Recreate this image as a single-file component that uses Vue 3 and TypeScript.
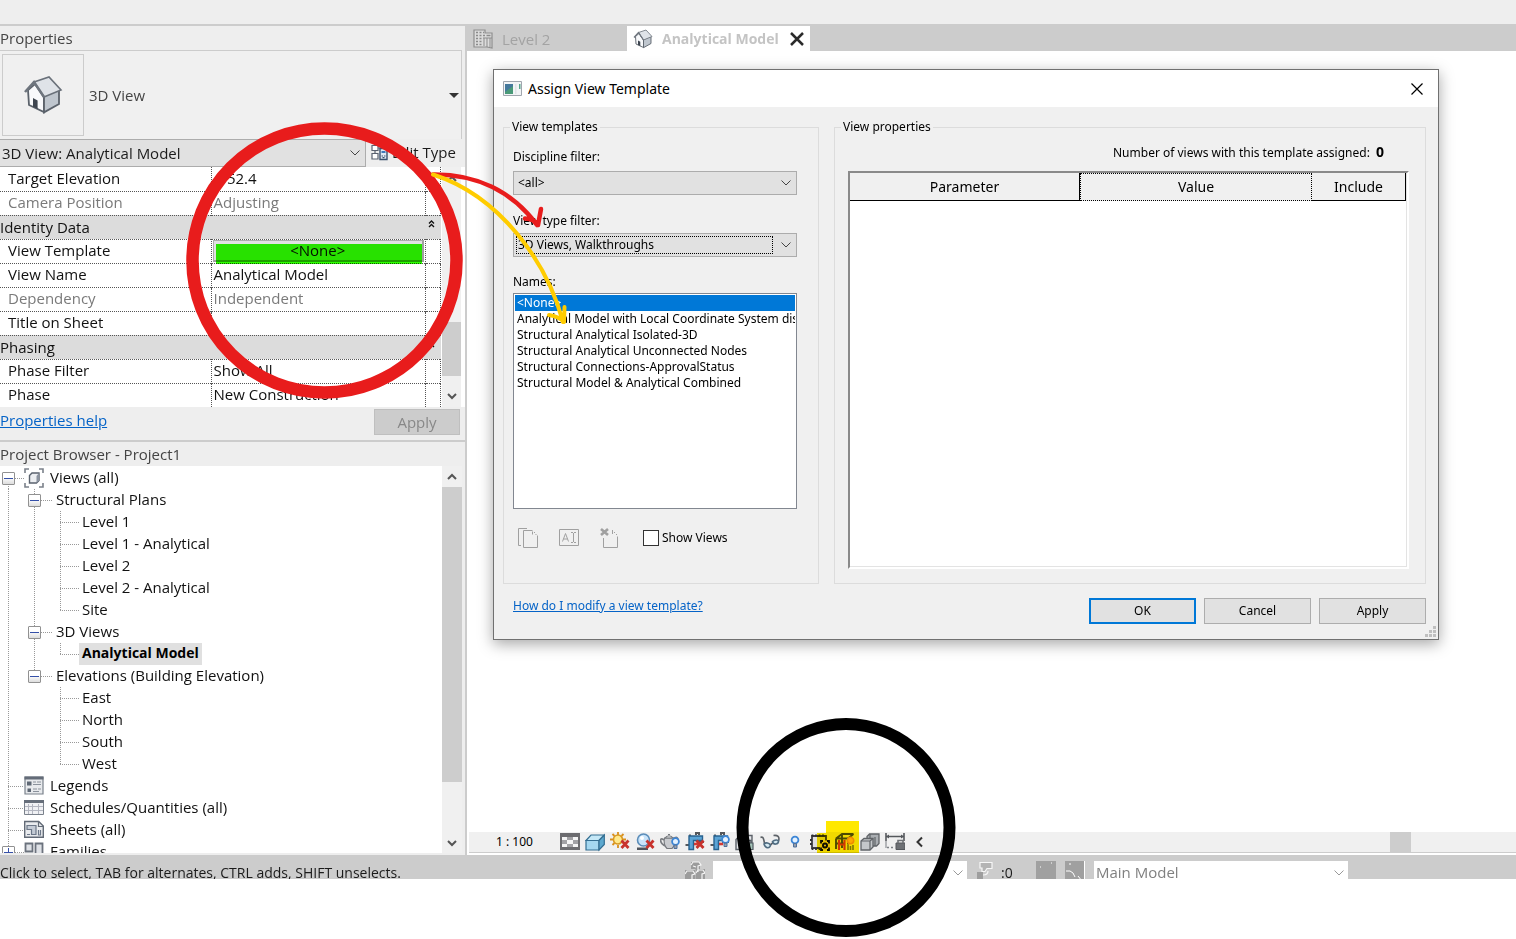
<script setup lang="ts">
import { ref } from 'vue'

interface Shape { d: string; fill?: string; stroke?: string; w?: number }
interface PropRow { label: string; value?: string; header?: boolean; muted?: boolean; button?: boolean }
interface TreeRow { label: string; depth: 0 | 1 | 2; toggle?: 'minus' | 'plus'; icon?: string; active?: boolean; guides: string }

const circle = (x: number, y: number, r: number): string =>
  `M${x - r} ${y}a${r} ${r} 0 1 0 ${2 * r} 0a${r} ${r} 0 1 0 ${-2 * r} 0z`

const cross: Shape = { d: 'M11.500 8.500L18.500 16M18.500 8.500L11.500 16', stroke: '#c8322c', w: 2.8 }
const bulb = (x: number, y: number): Shape[] => [
  { d: circle(x, y, 3.4), fill: '#e4f2ff', stroke: '#3d86d6', w: 1.8 },
  { d: `M${x - 1.5} ${y + 3.6}h3v3.400h-3z`, fill: '#9aa0a8', stroke: '#4d6f9c', w: 1 },
]
const crop: Shape[] = [
  { d: 'M0.500 13h4M12 10h7M4 3.500h2M11 3v-2h3v2', stroke: '#55585c', w: 2 },
  { d: 'M4 17.500V4H17.500V8.500H8.500V17.500z', fill: '#5ba4d6', stroke: '#28628f', w: 1.4 },
  { d: 'M9 12h4', stroke: '#d23a34', w: 2.6 },
]
const house: Shape[] = [
  { d: 'M2.500 7.500L6 4.500 10.500 11v7.500L3 15z', fill: '#f8f9fb', stroke: '#5b626b', w: 0.9 },
  { d: 'M10.500 10.500L18 7.500V14.500L10.500 18.700z', fill: '#bfc6ce', stroke: '#5b626b', w: 0.9 },
  { d: 'M5.500 3.500L13 1 19 7.500 10.500 11z', fill: '#dfe3e8', stroke: '#6a717a', w: 0.8 },
  { d: 'M1 8.500L5.500 3.500 10.500 11', stroke: '#6e757e', w: 1.3 },
  { d: 'M5 11.500l2.300 1.200v4.300l-2.300-1.100z', fill: '#3f4650' },
]

const icons: Record<string, Shape[]> = {
  house,
  plan: [
    { d: 'M1 1h11v3h7v15l-5-1H1z', fill: '#dcdcdc', stroke: '#8e8e8e', w: 1.2 },
    { d: 'M3 3.500h2M6.500 3.500h2M10 3.500h1M3 6.500h2M6.500 6.500h2M10 6.500h2M3 9.500h2M6.500 9.500h2M3 12.500h2M6.500 12.500h2M3 15.500h2M6.500 15.500h2M13.500 6.500h4', stroke: '#8b8b8b', w: 1.6 },
    { d: 'M11 9v8M14 9v9M17 9v9M10 9h9', stroke: '#8b8b8b', w: 1 },
  ],
  views: [
    { d: 'M1 5V1h4M15 1h4v4M19 15v4h-4M5 19H1v-4', stroke: '#7b818a', w: 1.6 },
    { d: 'M5.500 7.500L8 5h7v7.500L12.500 15h-7z', fill: '#eceef1', stroke: '#59616d', w: 1.4 },
    { d: 'M12.500 8v7L15 12.500V5z', fill: '#8b93a0' },
  ],
  legends: [
    { d: 'M1 1h18v17H1z', fill: '#e8eaed', stroke: '#7a818b', w: 1.2 },
    { d: 'M0.500 0.500h19v3h-19z', fill: '#646c78' },
    { d: 'M3 5.500h4.500v4H3zM3.500 12.500h3.500v3.500H3.500z', fill: '#5f6875' },
    { d: 'M9 6h3M13 6h4M9 8.500h8M9 13h4M14 13h3M9 15.500h6', stroke: '#8b929c', w: 1.2 },
  ],
  schedules: [
    { d: 'M0.500 3h19v13.500H0.500z', fill: '#f0f1f4', stroke: '#7a818b', w: 1 },
    { d: 'M0 2h20v3H0z', fill: '#666e7a' },
    { d: 'M1 8.500h18M1 12.500h18M4.500 6v10M8.500 6v10M14.500 6v10', stroke: '#b3b6c0', w: 1 },
  ],
  sheets: [
    { d: 'M0.700 1.500h14L19.300 6V17.300H0.700z', fill: '#e9ebee', stroke: '#626a76', w: 1.4 },
    { d: 'M14.500 1.500v5h4.500', stroke: '#626a76', w: 1.2 },
    { d: 'M3 5.500h9v9H7.500V9.500H3z', fill: '#c4cbd5', stroke: '#6c7788', w: 1.2 },
    { d: 'M3 14.500h3M14.500 10v5h2v-5', stroke: '#6c7788', w: 1.2 },
  ],
  families: [
    { d: 'M1.500 1.500h7v8h-7zM11.500 1.500h7v16h-7z', fill: '#dfe2e7', stroke: '#6b727d', w: 1.8 },
    { d: 'M1.500 12.500h7v5h-7z', fill: '#cfd4da', stroke: '#6b727d', w: 1.6 },
  ],
  editType: [
    { d: 'M1 1.500h6v5H1zM1 9.500h6v5.500H1z', fill: '#fff', stroke: '#5a6270', w: 1.2 },
    { d: 'M4 6.500v3M7 4h3v1', stroke: '#5a6270', w: 1.2 },
    { d: 'M9 4.500h7v11H9z', fill: '#dfe8f3', stroke: '#39506e', w: 1.4 },
    { d: 'M10.500 7h4v2h-4z', fill: '#3e78b8' },
    { d: 'M10.500 12h1.500M13 12h1.500M11.500 13.700h2', stroke: '#39506e', w: 1.2 },
  ],
  windowIcon: [
    { d: 'M0.500 0.500h18v14H0.500z', fill: '#f2f4f6', stroke: '#a0a6ae', w: 1 },
    { d: 'M2 3h8v10H2z', fill: '#4a9a78' },
    { d: 'M2 3h8v2L2 11z', fill: '#44789c' },
    { d: 'M12 3h1.500v10H12z', fill: '#dfe3e7' },
    { d: 'M16 3h1.500v5H16z', fill: '#57a58c' },
  ],
  detail: [
    { d: 'M0 1h20v17H0z', fill: '#6d6d70' },
    { d: 'M2 5h5v3H2zM13 5h5v3h-5zM7 8h6v4H7zM2 12h5v3H2zM13 12h5v3h-5z', fill: '#f5f5f5' },
    { d: 'M7 5h6v3H7zM2 8h5v4H2zM13 8h5v4h-5zM7 12h6v3H7z', fill: '#a3a3a6' },
  ],
  cube: [
    { d: 'M1 8.500h13v9.500H1z', fill: '#a5d8f0', stroke: '#356f92', w: 1.2 },
    { d: 'M1 8.500L6 3h13.300L14 8.500z', fill: '#c5e8f7', stroke: '#356f92', w: 1.2 },
    { d: 'M14 8.500L19.300 3v9.500L14 18z', fill: '#5da9cf', stroke: '#356f92', w: 1.2 },
  ],
  sun: [
    { d: 'M8 0v3M8 13v3M0 7.500h3M13 7.500h3M2.500 2l2 2M13.500 2l-2 2M2.500 13l2-2', stroke: '#d98f1c', w: 1.8 },
    { d: circle(8, 7.5, 4.5), fill: '#ffe98c', stroke: '#d99a22', w: 1.6 },
    cross,
  ],
  shadow: [
    { d: 'M2 15.500h11v2.500H2z', fill: '#4e545c' },
    { d: circle(8.5, 8, 6), fill: '#c9e4fa', stroke: '#5b8db9', w: 1.6 },
    { d: circle(7, 6, 2), fill: '#fff' },
    cross,
  ],
  teapot: [
    { d: 'M4 8C1 6 0 7 1 10s3 3 4 4M13 7c4-3 6-1 4 3', stroke: '#7a7d82', w: 1.8 },
    { d: 'M4.500 6h9c2 4 1 8-1.500 10.500h-5C4 13.500 3.500 10.500 4.500 6z', fill: '#c9cbcf', stroke: '#75787d', w: 1.1 },
    { d: 'M5 6c2-3 6-3 8 0zM8 2.500h2', fill: '#e3e4e6', stroke: '#75787d', w: 1.2 },
    ...bulb(15.5, 9.5),
  ],
  cropOff: [...crop, cross],
  cropShow: [...crop, ...bulb(15.5, 7.5)],
  lockView: [
    { d: 'M1 7.500L5 3.500h12v9l-4 5H1z', fill: '#e3e5e8', stroke: '#5b6168', w: 1.4 },
    { d: 'M10 11h8v6.500h-8z', fill: '#a5c4b8', stroke: '#4f5960', w: 1.2 },
    { d: 'M12 11V8.500h4V11', stroke: '#4f5960', w: 1.4 },
  ],
  glasses: [
    { d: 'M0.500 5.500C3.500 4 4 8 4.500 11.500M10.500 13c1-1.500 2-1.500 2.500-2.500M18.500 9c1.500-4.500-1-6-5-5.500', stroke: '#5c6167', w: 1.6 },
    { d: 'M4 12c2-2 5-1 6.500 1-.500 3.500-5 4-6.500-1z', fill: '#d4e9f2', stroke: '#4f6b80', w: 1.6 },
    { d: 'M12.500 9.500c2-2 5.500-2 6-.500 0 3.500-5 4.500-6 .500z', fill: '#d4e9f2', stroke: '#4f6b80', w: 1.6 },
  ],
  reveal: [...bulb(10, 8)],
  temporary: [
    { d: 'M2 4h14v12H2z', fill: '#dedee2', stroke: '#3d3d44', w: 1.8 },
    { d: 'M2.500 2.500v2M6 2.500v2M9.500 2.500v2M13 2.500v2M2.500 16v2M6 16v2M9.500 16v2M0 8h2M0 12h2', stroke: '#2e2e33', w: 1.8 },
    { d: 'M10 8.500h10v10H10z', fill: '#e8d200' },
    { d: 'M11 11.500V9h2M17 9h2v2.500M19 15.500V18h-2M13 18h-2v-2.500', stroke: '#111', w: 1.8 },
    { d: circle(15, 13.5, 2), fill: '#e8d200', stroke: '#111', w: 2 },
  ],
  analytical: [
    { d: 'M1 6.500L7 2h11.500M1 6.500h12L18.500 2M1 6.500V17M7 3v13M13 6.500v6M1 11.500h8', stroke: '#4c5226', w: 1.9 },
    { d: 'M4 8v10M9.500 8v10M4 12.500h5.500', stroke: '#d3401c', w: 2.2 },
    { d: circle(15.5, 8.5, 3.2), fill: '#ffb84a', stroke: '#f09a28', w: 1.6 },
    { d: 'M13 13v5M15.500 14v4M18 13v5', stroke: '#81813a', w: 1.6 },
  ],
  displace: [
    { d: 'M7 4.500L9.500 2H19v9.500L16.500 14H7z', fill: '#aaaeb2', stroke: '#606468', w: 1.3 },
    { d: 'M1 9l3-2.500h9V15l-3 3H1z', fill: '#c4c7ca', stroke: '#606468', w: 1.3 },
    { d: 'M1 9h9v9M10 9l3-2.500M10 2v4M15 5v9', stroke: '#606468', w: 1.2 },
  ],
  constraint: [
    { d: 'M1 1v8M19 1v8M1 4.500h18', stroke: '#55585c', w: 1.6 },
    { d: 'M1 4.500l3-2v4zM19 4.500l-3-2v4z', fill: '#55585c' },
    { d: 'M1 9v7', stroke: '#9a9da1', w: 1.4 },
    { d: 'M2 15.500h2M6 15.500h2', stroke: '#7c8085', w: 1.6 },
    { d: 'M11 11h9v6.500h-9z', fill: '#6d7074', stroke: '#54575b', w: 1 },
    { d: 'M13 11V8.500h5V11', stroke: '#6d7074', w: 1.6 },
  ],
  workset: [
    { d: 'M6 1h9v7H6zM0 9h10v10H0zM10.500 8H20v11h-9.500z', fill: '#9c9c9c' },
    { d: 'M6 4l2-3h6l2 3-3 1v6M8 5l3 1M0 13l2-3h6l2 3-3 1v5M11 12l2-3h5l2 3-3 1v5', stroke: '#f5f5f5', w: 1.2 },
  ],
  option: [
    { d: 'M4 1.500h12v6H11l-2 3H6V7H4z', fill: '#b4b4b4', stroke: '#f7f7f7', w: 1.2 },
    { d: 'M1 11h6v7H1z', fill: '#9e9e9e' },
    { d: 'M7 14c3 0 5-1 5-4', stroke: '#f7f7f7', w: 1.2 },
  ],
  square: [
    { d: 'M0 0h20v20H0z', fill: '#a0a0a0' },
    { d: 'M4 6h1M15 2h1', stroke: '#fff', w: 1 },
  ],
  pick: [
    { d: 'M0 0h20v20H0z', fill: '#a0a0a0' },
    { d: 'M19.500 0v20M1 10h4l3 2 2 4M5 2v2M13 15l4 5', stroke: '#fff', w: 1 },
  ],
  duplicate: [
    { d: 'M4 18.500H1.500V1.500h8.500', stroke: '#a0a0a0', w: 1 },
    { d: 'M6.500 3.500v17h14v-12M6.500 3.500h9M15.500 4.500v3M17 5.500h1M18.500 7.500h1', stroke: '#a0a0a0', w: 1 },
  ],
  rename: [
    { d: 'M1.500 2.500h19v16h-19z', stroke: '#a0a0a0', w: 1 },
    { d: 'M4.500 14.500L7.500 6.500 10.500 14.500M5.500 12h4M13 5.500h2M16 5.500h2M15.500 6v9M13 15.500h2M16 15.500h2', stroke: '#a0a0a0', w: 1 },
  ],
  remove: [
    { d: 'M2 2l7 6M9 2l-7 6', stroke: '#a0a0a0', w: 2.6 },
    { d: 'M4.500 11v9.500h14V9.500M13.500 3v4M15 5.500h1M17 7.500h1', stroke: '#a0a0a0', w: 1 },
  ],
}

const propRows: PropRow[] = [
  { label: 'Target Elevation', value: '-152.4' },
  { label: 'Camera Position', value: 'Adjusting', muted: true },
  { label: 'Identity Data', header: true },
  { label: 'View Template', value: '<None>', button: true },
  { label: 'View Name', value: 'Analytical Model' },
  { label: 'Dependency', value: 'Independent', muted: true },
  { label: 'Title on Sheet', value: '' },
  { label: 'Phasing', header: true },
  { label: 'Phase Filter', value: 'Show All' },
  { label: 'Phase', value: 'New Construction' },
]

const root = 'M8.500 0V22'
const branch = 'M34.500 0V22'
const leaf = 'M60.500 0V22M60 11.500H79'
const leafEnd = 'M60.500 0V11M60 11.500H79'

const treeRows: TreeRow[] = [
  { label: 'Views (all)', depth: 0, toggle: 'minus', icon: 'views', guides: 'M8.500 11V22M15 11.500H24' },
  { label: 'Structural Plans', depth: 1, toggle: 'minus', guides: root + branch + 'M41 11.500H53' },
  { label: 'Level 1', depth: 2, guides: root + branch + leaf },
  { label: 'Level 1 - Analytical', depth: 2, guides: root + branch + leaf },
  { label: 'Level 2', depth: 2, guides: root + branch + leaf },
  { label: 'Level 2 - Analytical', depth: 2, guides: root + branch + leaf },
  { label: 'Site', depth: 2, guides: root + branch + leafEnd },
  { label: '3D Views', depth: 1, toggle: 'minus', guides: root + branch + 'M41 11.500H53' },
  { label: 'Analytical Model', depth: 2, active: true, guides: root + branch + leafEnd },
  { label: 'Elevations (Building Elevation)', depth: 1, toggle: 'minus', guides: root + 'M34.500 0V11M41 11.500H53' },
  { label: 'East', depth: 2, guides: root + leaf },
  { label: 'North', depth: 2, guides: root + leaf },
  { label: 'South', depth: 2, guides: root + leaf },
  { label: 'West', depth: 2, guides: root + leafEnd },
  { label: 'Legends', depth: 0, icon: 'legends', guides: root + 'M8 11.500H24' },
  { label: 'Schedules/Quantities (all)', depth: 0, icon: 'schedules', guides: root + 'M8 11.500H24' },
  { label: 'Sheets (all)', depth: 0, icon: 'sheets', guides: root + 'M8 11.500H24' },
  { label: 'Families', depth: 0, toggle: 'plus', icon: 'families', guides: root + 'M15 11.500H24' },
]

const viewTools = [
  ['detail', 'Detail level'], ['cube', 'Visual style'], ['sun', 'Sun path'], ['shadow', 'Shadows'],
  ['teapot', 'Rendering dialog'], ['cropOff', 'Crop view'], ['cropShow', 'Show crop region'],
  ['lockView', 'Lock 3D view'], ['glasses', 'Temporary hide'], ['reveal', 'Reveal hidden elements'],
  ['temporary', 'Temporary view properties'], ['analytical', 'Analytical model'],
  ['displace', 'Displacement sets'], ['constraint', 'Reveal constraints'],
]

const templates = [
  '<None>',
  'Analytical Model with Local Coordinate System displayed',
  'Structural Analytical Isolated-3D',
  'Structural Analytical Unconnected Nodes',
  'Structural Connections-ApprovalStatus',
  'Structural Model & Analytical Combined',
]
const selected = ref(0)
const showViews = ref(false)
const listTools = [['duplicate', 'Duplicate'], ['rename', 'Rename'], ['remove', 'Delete']]
</script>

<template>
  <div class="app">
    <div class="ribbon"></div>

    <div class="workspace">
      <aside class="side">
        <section class="properties">
          <h2 class="pane-title">Properties</h2>
          <div class="type-selector">
            <div class="preview">
              <svg class="house" viewBox="0 0 20 20">
                <path v-for="(s, i) in icons.house" :key="i" :d="s.d" :fill="s.fill ?? 'none'" :stroke="s.stroke ?? 'none'" :stroke-width="s.w" />
              </svg>
            </div>
            <span class="type-name">3D View</span>
            <button class="type-drop" aria-label="Choose type"></button>
          </div>

          <div class="instance">
            <div class="combo instance-combo">
              <select aria-label="Instance"><option>3D View: Analytical Model</option></select>
              <svg class="chev" viewBox="0 0 10 6"><path d="M0.500 0.500L5 5 9.500 0.500" /></svg>
            </div>
            <button class="edit-type">
              <svg class="edit-icon" viewBox="0 0 17 17">
                <path v-for="(s, i) in icons.editType" :key="i" :d="s.d" :fill="s.fill ?? 'none'" :stroke="s.stroke ?? 'none'" :stroke-width="s.w" />
              </svg>
              Edit Type
            </button>
          </div>

          <div class="grid-wrap">
            <table class="prop-grid">
              <colgroup><col class="c-name" /><col /><col class="c-end" /></colgroup>
              <tbody>
                <tr v-for="row in propRows" :key="row.label" :class="{ header: row.header, muted: row.muted }">
                  <template v-if="row.header">
                    <th colspan="2">{{ row.label }}</th>
                    <td class="fold">
                      <svg viewBox="0 0 7 8"><path d="M1 3.500L3.500 1 6 3.500M1 7L3.500 4.500 6 7" /></svg>
                    </td>
                  </template>
                  <template v-else>
                    <td class="name">{{ row.label }}</td>
                    <td class="value" :class="{ holder: row.button }">
                      <button v-if="row.button" class="template-btn">{{ row.value }}</button>
                      <template v-else>{{ row.value }}</template>
                    </td>
                    <td></td>
                  </template>
                </tr>
              </tbody>
            </table>
            <div class="scroll prop-scroll">
              <svg class="arrow" viewBox="0 0 10 7"><path d="M1 6L5 2 9 6" /></svg>
              <span class="thumb"></span>
              <svg class="arrow" viewBox="0 0 10 7"><path d="M1 1L5 5 9 1" /></svg>
            </div>
          </div>

          <div class="prop-foot">
            <a href="#">Properties help</a>
            <button class="apply" disabled>Apply</button>
          </div>
        </section>

        <section class="browser">
          <h2 class="pane-title">Project Browser - Project1</h2>
          <div class="browser-body">
            <ul class="tree">
              <li v-for="row in treeRows" :key="row.label" :class="['d' + row.depth, { parent: row.toggle }]">
                <svg class="guides" viewBox="0 0 80 22"><path :d="row.guides" /></svg>
                <button v-if="row.toggle" class="toggle" :aria-label="row.label">
                  <svg viewBox="0 0 11 11"><path :d="row.toggle === 'plus' ? 'M1 5.500H10M5.500 1V10' : 'M1 5.500H10'" /></svg>
                </button>
                <svg v-if="row.icon" class="tree-icon" viewBox="0 0 20 20">
                  <path v-for="(s, i) in icons[row.icon]" :key="i" :d="s.d" :fill="s.fill ?? 'none'" :stroke="s.stroke ?? 'none'" :stroke-width="s.w" />
                </svg>
                <span class="label" :class="{ active: row.active }">{{ row.label }}</span>
              </li>
            </ul>
            <div class="scroll tree-scroll">
              <svg class="arrow" viewBox="0 0 10 7"><path d="M1 6L5 2 9 6" /></svg>
              <span class="thumb"></span>
              <svg class="arrow" viewBox="0 0 10 7"><path d="M1 1L5 5 9 1" /></svg>
            </div>
          </div>
        </section>
      </aside>

      <main class="main">
        <nav class="tabs">
          <button class="tab">
            <svg class="tab-icon" viewBox="0 0 20 20">
              <path v-for="(s, i) in icons.plan" :key="i" :d="s.d" :fill="s.fill ?? 'none'" :stroke="s.stroke ?? 'none'" :stroke-width="s.w" />
            </svg>
            Level 2
          </button>
          <div class="tab current">
            <svg class="tab-icon" viewBox="0 0 20 20">
              <path v-for="(s, i) in icons.house" :key="i" :d="s.d" :fill="s.fill ?? 'none'" :stroke="s.stroke ?? 'none'" :stroke-width="s.w" />
            </svg>
            Analytical Model
            <button class="tab-close" aria-label="Close tab">
              <svg viewBox="0 0 14 14"><path d="M1 1L13 13M13 1L1 13" /></svg>
            </button>
          </div>
        </nav>

        <div class="canvas"></div>

        <div class="view-bar">
          <span class="scale">1 : 100</span>
          <button v-for="[name, title] in viewTools" :key="name" class="tool" :class="{ marked: name === 'analytical' }" :aria-label="title">
            <svg viewBox="0 0 20 20">
              <path v-for="(s, i) in icons[name]" :key="i" :d="s.d" :fill="s.fill ?? 'none'" :stroke="s.stroke ?? 'none'" :stroke-width="s.w" />
            </svg>
          </button>
          <button class="tool" aria-label="Collapse">
            <svg class="back" viewBox="0 0 20 20"><path d="M12 5.500L7.500 10 12 14.500" /></svg>
          </button>
          <div class="h-track"><span class="h-thumb"></span></div>
        </div>

        <section class="dialog" role="dialog" aria-labelledby="dlg-title">
          <header class="dlg-head">
            <svg class="dlg-icon" viewBox="0 0 19 15">
              <path v-for="(s, i) in icons.windowIcon" :key="i" :d="s.d" :fill="s.fill ?? 'none'" :stroke="s.stroke ?? 'none'" :stroke-width="s.w" />
            </svg>
            <h1 id="dlg-title">Assign View Template</h1>
            <button class="dlg-close" aria-label="Close">
              <svg viewBox="0 0 12 12"><path d="M0.500 0.500L11.500 11.500M11.500 0.500L0.500 11.500" /></svg>
            </button>
          </header>

          <div class="groups">
            <fieldset class="templates">
              <legend>View templates</legend>
              <label class="l1" for="discipline">Discipline filter:</label>
              <div class="combo">
                <select id="discipline"><option>&lt;all&gt;</option></select>
                <svg class="chev" viewBox="0 0 10 6"><path d="M0.500 0.500L5 5 9.500 0.500" /></svg>
              </div>
              <label class="l2" for="viewtype">View type filter:</label>
              <div class="combo focus">
                <select id="viewtype"><option>3D Views, Walkthroughs</option></select>
                <svg class="chev" viewBox="0 0 10 6"><path d="M0.500 0.500L5 5 9.500 0.500" /></svg>
              </div>
              <span id="names" class="l3">Names:</span>
              <ul class="names" role="listbox" aria-labelledby="names">
                <li v-for="(t, i) in templates" :key="t" role="option" :aria-selected="i === selected" :class="{ on: i === selected }" @click="selected = i">{{ t }}</li>
              </ul>
              <div class="list-tools">
                <button v-for="[name, title] in listTools" :key="name" disabled :aria-label="title">
                  <svg viewBox="0 0 22 22">
                    <path v-for="(s, i) in icons[name]" :key="i" :d="s.d" fill="none" :stroke="s.stroke" :stroke-width="s.w" />
                  </svg>
                </button>
                <label class="show"><input v-model="showViews" type="checkbox" />Show Views</label>
              </div>
            </fieldset>

            <fieldset class="view-props">
              <legend>View properties</legend>
              <p class="count">Number of views with this template assigned: <b>0</b></p>
              <div class="sheet">
                <table>
                  <colgroup><col class="w1" /><col /><col class="w3" /></colgroup>
                  <thead><tr><th>Parameter</th><th class="cur">Value</th><th>Include</th></tr></thead>
                </table>
              </div>
            </fieldset>
          </div>

          <footer class="dlg-foot">
            <a href="#">How do I modify a view template?</a>
            <button class="ok">OK</button>
            <button>Cancel</button>
            <button>Apply</button>
          </footer>
          <svg class="grip" viewBox="0 0 11 11">
            <path d="M8 0h3v3H8zM4 4h3v3H4zM8 4h3v3H8zM0 8h3v3H0zM4 8h3v3H4zM8 8h3v3H8z" />
          </svg>
        </section>
      </main>
    </div>

    <div class="status">
      <span class="hint">Click to select, TAB for alternates, CTRL adds, SHIFT unselects.</span>
      <svg class="st-icon" viewBox="0 0 20 20">
        <path v-for="(s, i) in icons.workset" :key="i" :d="s.d" :fill="s.fill ?? 'none'" :stroke="s.stroke ?? 'none'" :stroke-width="s.w" />
      </svg>
      <div class="st-combo">
        <select aria-label="Workset"><option></option></select>
        <svg class="chev" viewBox="0 0 10 6"><path d="M0.500 0.500L5 5 9.500 0.500" /></svg>
      </div>
      <svg class="st-icon" viewBox="0 0 20 20">
        <path v-for="(s, i) in icons.option" :key="i" :d="s.d" :fill="s.fill ?? 'none'" :stroke="s.stroke ?? 'none'" :stroke-width="s.w" />
      </svg>
      <span class="zero">:0</span>
      <svg class="st-icon sq" viewBox="0 0 20 20">
        <path v-for="(s, i) in icons.square" :key="i" :d="s.d" :fill="s.fill ?? 'none'" :stroke="s.stroke ?? 'none'" :stroke-width="s.w" />
      </svg>
      <svg class="st-icon sq" viewBox="0 0 20 20">
        <path v-for="(s, i) in icons.pick" :key="i" :d="s.d" :fill="s.fill ?? 'none'" :stroke="s.stroke ?? 'none'" :stroke-width="s.w" />
      </svg>
      <div class="st-combo">
        <select aria-label="Design option"><option>Main Model</option></select>
        <svg class="chev" viewBox="0 0 10 6"><path d="M0.500 0.500L5 5 9.500 0.500" /></svg>
      </div>
    </div>

    <svg class="ink" viewBox="0 0 960 939">
      <circle cx="324.500" cy="260.500" r="132" stroke="#e81c1c" stroke-width="12.500" />
      <path d="M433 174.500C476 174 512 191 537 225M541 209L538 225M525 218.500Q534 219 538 225" stroke="#e81c1c" stroke-width="4.500" />
      <path d="M433 174.500C500 196 547 262 563 322M564.500 307L564 322M549 315Q560 317 564 322" stroke="#ffcc00" stroke-width="4" />
      <circle cx="846" cy="827.500" r="103.500" stroke="#000" stroke-width="12" />
    </svg>
  </div>
</template>

<style>
body { margin: 0; background: #fff; }
</style>

<style scoped>
* { box-sizing: border-box; }
.app {
  position: relative;
  display: flex;
  flex-direction: column;
  height: 100vh;
  min-height: 760px;
  padding-bottom: 60px;
  background: #fff;
  font-family: "Open Sans", "Noto Sans", sans-serif;
  font-size: 15px;
  line-height: 22px;
  color: #1b1b1b;
}
button, select, input { font: inherit; color: inherit; margin: 0; }
button { padding: 0; border: 0; background: none; }
svg { display: block; flex: none; }
h1, h2, p, ul { margin: 0; padding: 0; font-size: inherit; font-weight: 400; }
ul { list-style: none; }
a { color: #0563c7; text-decoration: underline; }

.ribbon { flex: none; height: 24px; background: #eee; }
.workspace { flex: 1; display: flex; min-height: 0; }

.side {
  flex: none;
  width: 467px;
  display: flex;
  flex-direction: column;
  border-top: 2px solid #ccc;
  border-right: 2px solid #ccc;
  background: #eee;
}
.pane-title { height: 24px; line-height: 24px; color: #444; }

.type-selector {
  display: flex;
  align-items: center;
  height: 89px;
  margin-right: 3px;
  padding: 0 2px;
  border: solid #ccc;
  border-width: 1px 1px 0 0;
  background: #f0f0f0;
}
.preview {
  display: flex;
  align-items: center;
  justify-content: center;
  width: 82px;
  height: 82px;
  border: 1px solid #ccc;
}
.house { width: 40px; height: 40px; }
.type-name { flex: 1; padding-left: 5px; color: #444; }
.type-drop { border: 5px solid transparent; border-top-color: #333; border-bottom-width: 0; }

.instance { display: flex; align-items: flex-start; height: 28px; }
.combo { position: relative; display: flex; align-items: center; height: 24px; border: 1px solid #acacac; background: #e1e1e1; }
.combo select { flex: 1; width: 100%; height: 100%; padding: 0 24px 0 4px; border: 0; appearance: none; background: none; outline: 0; }
.chev { position: absolute; right: 5px; width: 10px; height: 6px; pointer-events: none; }
.chev path { fill: none; stroke: #444; stroke-width: 1; }
.instance-combo { width: 366px; height: 28px; border-left: 0; }
.instance-combo select { padding-left: 2px; }
.edit-type { display: flex; align-items: center; gap: 4px; height: 26px; padding-left: 5px; }
.edit-icon { width: 17px; height: 17px; }

.grid-wrap { display: flex; background: #fff; }
.prop-grid { flex: 1; table-layout: fixed; border-collapse: collapse; color: #111; }
.c-name { width: 211px; }
.c-end { width: 15px; }
.prop-grid tr { height: 24px; border-bottom: 1px dotted #555; }
.prop-grid tr:last-child { border-bottom: 0; }
.prop-grid td { height: 24px; padding: 0 0 2px; line-height: 20px; border-right: 1px dotted #555; white-space: nowrap; }
.prop-grid .name { padding-left: 8px; }
.prop-grid .value { padding-left: 2px; }
.prop-grid th { padding: 0; text-align: left; font-weight: 400; }
.prop-grid .header { background: #dcdcdc; }
.muted { color: #7a7a7a; }
.prop-grid .fold { border: 0; }
.fold svg { width: 7px; height: 8px; margin: 0 0 4px 2px; }
.fold path { fill: none; stroke: #111; stroke-width: 1.3; }
.prop-grid .holder { padding: 0 1px; }
.template-btn {
  position: relative;
  display: block;
  width: 100%;
  height: 22px;
  line-height: 19px;
  border: 1px solid #acacac;
  border-bottom: 2px solid #a0a0a0;
  border-right: 2px solid #a0a0a0;
  background: #e1e1e1;
}
.template-btn::after {
  content: "";
  position: absolute;
  inset: 3px 0 -4px 2px;
  background: #2dff00;
  mix-blend-mode: multiply;
}

.scroll { display: flex; flex-direction: column; align-items: center; background: #f0f0f0; }
.arrow { width: 10px; height: 7px; }
.arrow path { fill: none; stroke: #555; stroke-width: 2; }
.thumb { width: 100%; background: #cdcdcd; }
.prop-scroll { width: 20px; margin-right: 4px; padding: 8px 0 7px; border-left: 1px solid #fff; }
.prop-scroll .thumb { height: 54px; margin: 140px 0 auto; }

.prop-foot { display: flex; justify-content: space-between; height: 33px; padding: 2px 5px 0 0; }
.apply { width: 86px; height: 26px; border: 1px solid #bfbfbf; background: #ccc; color: #888; }

.browser { flex: 1; display: flex; flex-direction: column; min-height: 0; border-top: 2px solid #ccc; padding-bottom: 2px; }
.browser-body { flex: 1; display: flex; min-height: 0; margin-right: 3px; overflow: hidden; background: #fff; }
.tree { flex: 1; padding-top: 1px; }
.tree li { position: relative; display: flex; align-items: center; height: 22px; }
.guides { position: absolute; left: 0; top: 0; width: 80px; height: 22px; }
.guides path { fill: none; stroke: #999; stroke-width: 1; stroke-dasharray: 1 1; }
.toggle { position: relative; width: 13px; height: 13px; border: 1px solid #919191; border-radius: 1px; background: linear-gradient(#fff 40%, #ddd); }
.toggle svg { width: 11px; height: 11px; }
.toggle path { stroke: #3550a8; stroke-width: 1; }
.d0 { padding-left: 24px; }
.d0.parent { padding-left: 2px; }
.d0 .toggle { margin-right: 9px; }
.d1 { padding-left: 28px; }
.d1 .toggle { margin-right: 12px; }
.d2 { padding-left: 79px; }
.tree-icon { position: relative; width: 20px; height: 20px; margin-right: 3px; }
.label { padding: 0 3px 2px; line-height: 20px; color: #111; white-space: nowrap; }
.active { font-weight: 700; background: #e0e0e0; color: #000; font-size: 14px; }
.tree-scroll { width: 20px; padding: 7px 0 6px; }
.tree-scroll .thumb { flex: 0 1 295px; margin: 7px 0 auto; }

.main { position: relative; flex: 1; min-width: 0; display: flex; flex-direction: column; background: #fff; }
.tabs { flex: none; display: flex; height: 27px; padding-top: 2px; background: #ccc; }
.tab { display: flex; align-items: center; width: 160px; padding-left: 6px; gap: 9px; color: #a3a3a3; line-height: 20px; }
.current { width: auto; padding-right: 6px; background: #fff; color: #c4c4c4; font-weight: 700; font-size: 14px; }
.tab .tab-close { padding-left: 2px; }
.tab-icon { width: 20px; height: 20px; }
.tab-close svg { width: 14px; height: 14px; }
.tab-close path { stroke: #2b2b2b; stroke-width: 2.500; }
.canvas { flex: 1; }

.view-bar { flex: none; display: flex; align-items: center; height: 21px; margin: 0 0 2px 2px; border-bottom: 1px solid #ccc; background: #f0f0f0; font: 12px/18px "Noto Sans", "Open Sans", sans-serif; color: #000; }
.scale { width: 88px; padding-left: 27px; }
.tool { position: relative; width: 25px; display: flex; justify-content: center; }
.tool svg { width: 20px; height: 20px; }
.back path { fill: none; stroke: #333; stroke-width: 2; }
.marked::after {
  content: "";
  position: absolute;
  inset: -11px -2px -1px -15px;
  background: #ffe800;
  clip-path: polygon(9px 0, 100% 0, 100% 100%, 0 100%, 0 12px, 9px 12px);
  mix-blend-mode: multiply;
}
.h-track { flex: 1; align-self: stretch; display: flex; justify-content: flex-end; padding-right: 105px; }
.h-thumb { width: 21px; background: #cdcdcd; }

.dialog {
  position: absolute;
  left: 26px;
  right: 77px;
  top: 45px;
  border: 1px solid #707070;
  background: #f0f0f0;
  box-shadow: 0 4px 14px rgba(0, 0, 0, 0.35);
  font: 12px/16px "Noto Sans", "Open Sans", sans-serif;
  color: #000;
}
.dlg-head { display: flex; align-items: center; height: 37px; padding: 0 15px 0 9px; background: #fff; font-size: 14px; line-height: 20px; }
.dlg-icon { width: 19px; height: 15px; }
.dlg-head h1 { flex: 1; padding-left: 6px; }
.dlg-close svg { width: 12px; height: 12px; }
.dlg-close path { stroke: #000; stroke-width: 1.200; }

.groups { display: flex; gap: 15px; padding: 12px 12px 0 9px; }
fieldset { display: flex; flex-direction: column; min-width: 0; margin: 0; border: 1px solid #dcdcdc; }
legend { margin-left: -3px; padding: 0 2px; }
.templates { flex: none; width: 316px; padding: 0 21px 0 9px; }
.l1 { margin: 14px 0 6px; }
.l2 { margin: 18px 0 4px; }
.l3 { margin: 17px 0 3px; }
.focus::before { content: ""; position: absolute; inset: 2px 23px 2px 2px; border: 1px dotted #000; pointer-events: none; }
.names { height: 216px; padding: 1px; overflow: hidden; border: 1px solid #828790; background: #fff; }
.names li { padding-left: 2px; height: 16px; white-space: nowrap; overflow: hidden; }
.names .on { background: #0078d7; color: #fff; }
.list-tools { display: flex; align-items: center; height: 22px; margin: 18px 0 34px; padding-left: 4px; }
.list-tools button { margin-right: 19px; }
.list-tools svg { width: 22px; height: 22px; }
.show { display: flex; align-items: center; gap: 3px; margin-left: 3px; }
.show input { appearance: none; width: 16px; height: 16px; border: 1px solid #333; background: #fff; }
.show input:checked { background: #0078d7; }

.view-props { flex: 1; padding: 0 16px 14px 13px; }
.view-props legend { margin-left: -7px; }
.count { margin: 9px 25px 10px 0; text-align: right; }
.count b { margin-left: 3px; font-size: 14px; }
.sheet { height: 398px; padding-right: 1px; border: 2px solid; border-color: #8a8a8a #fff #fff #8a8a8a; background: #fff; box-shadow: inset -1px -1px #e3e3e3; }
.sheet table { width: 100%; table-layout: fixed; border-collapse: separate; border-spacing: 0; font-size: 14px; line-height: 20px; }
.w1 { width: 230px; }
.w3 { width: 94px; }
.sheet th { height: 28px; padding: 0; font-weight: 400; background: #f0f0f0; border: solid #000; border-width: 0 1px 1px 0; }
.sheet .cur { border: 1px dotted #000; }

.dlg-foot { display: flex; align-items: flex-start; margin: 14px 12px 15px 19px; }
.dlg-foot a { margin-right: auto; }
.dlg-foot button { width: 107px; height: 26px; margin-left: 8px; border: 1px solid #adadad; background: #e1e1e1; }
.dlg-foot .ok { border: 2px solid #0078d7; }
.grip { position: absolute; right: 2px; bottom: 2px; width: 11px; height: 11px; }
.grip path { fill: #bfbfbf; }

.status { flex: none; display: flex; align-items: flex-start; height: 24px; overflow: hidden; background: #ccc; padding-top: 6px; }
.hint { width: 685px; padding-top: 1px; white-space: nowrap; font-size: 14px; }
.st-icon { width: 20px; height: 20px; }
.st-combo { position: relative; width: 254px; height: 26px; margin: 0 9px 0 8px; background: #fff; }
.st-combo select { width: 100%; height: 22px; padding: 0 2px; border: 0; appearance: none; background: none; color: #808080; }
.st-combo .chev { top: 9px; right: 4px; }
.st-combo .chev path { stroke: #999; }
.zero { width: 40px; padding: 1px 0 0 5px; font-size: 14px; }
.sq { margin-right: 9px; }
.sq + .st-combo { margin-left: 0; }

.ink { position: absolute; left: 0; top: 0; width: 960px; height: 939px; pointer-events: none; fill: none; stroke-linecap: round; }
</style>
